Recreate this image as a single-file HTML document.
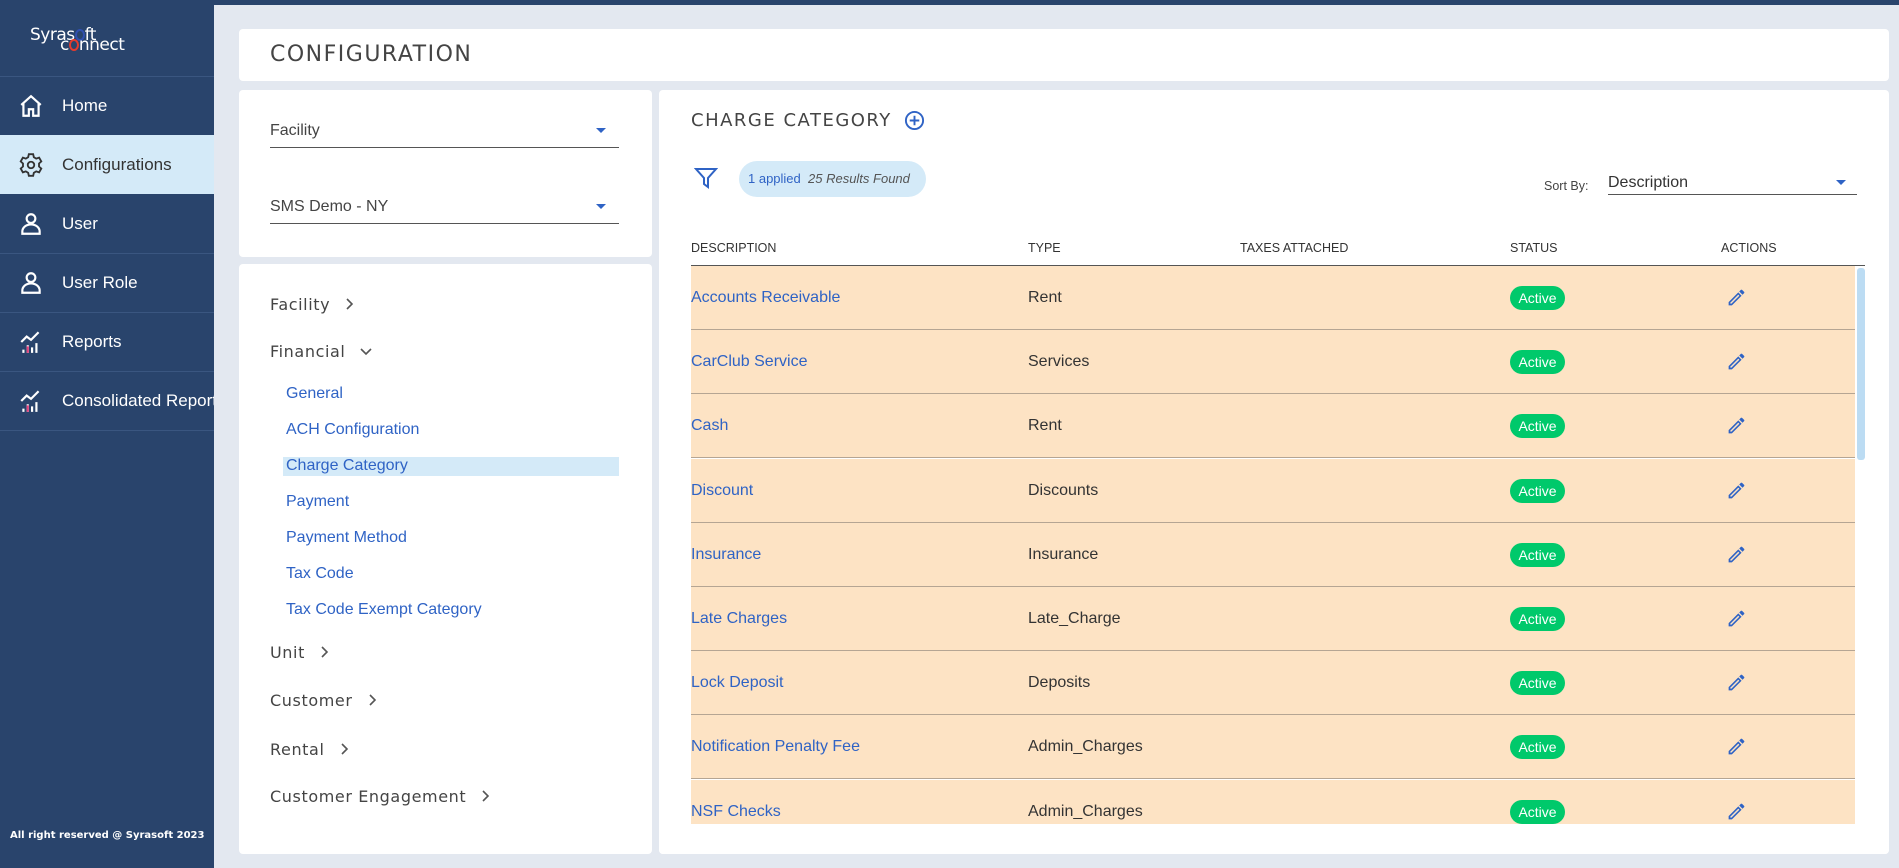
<!DOCTYPE html>
<html><head><meta charset="utf-8"><style>
*{box-sizing:border-box;margin:0;padding:0}
body{width:1899px;height:868px;overflow:hidden;background:#e3e8f0;font-family:"Liberation Sans",sans-serif;position:relative}
.abs{position:absolute}
#side{left:0;top:0;width:214px;height:868px;background:#29446c}
#topbar{left:214px;top:0;width:1685px;height:5px;background:#29446c}
.nav{position:absolute;left:0;width:214px;height:59px;border-top:1px solid #3a5680;color:#fff;font-size:17px;display:flex;align-items:center;white-space:nowrap;overflow:hidden}
.nav svg{position:absolute;left:18px}
.nav span{position:absolute;left:62px}
.nav.act{background:#d4eaf8;color:#333}
.card{position:absolute;background:#fff;border-radius:4px}
.h{font-family:"DejaVu Sans","Liberation Sans",sans-serif;color:#444;letter-spacing:0.5px}
.mh{position:absolute;left:270px;font-size:16px;font-family:"DejaVu Sans",sans-serif;color:#444;letter-spacing:.6px;white-space:nowrap}
.mh svg{display:inline-block;margin-left:14px;vertical-align:-1px}
.si{position:absolute;left:286px;font-size:16px;color:#2f63c5}
.th{position:absolute;top:241px;font-size:12.5px;color:#333}
.row{position:absolute;left:691px;width:1164px;height:64px;background:#fde3c4;border-bottom:1.5px solid #b5a593;font-size:16px}
.row div{position:absolute;top:23px}
.badge{position:absolute;left:819px;top:20px;width:55px;height:24px;border-radius:12px;background:#00c96b;color:#fff;font-size:14px;text-align:center;line-height:24px}
</style></head><body>
<div id="side" class="abs"></div>
<div id="topbar" class="abs"></div>
<div class="abs" style="left:30px;top:25px;color:#fff;font-size:17px;font-family:'DejaVu Sans',sans-serif;letter-spacing:-.5px">Syras<span style="display:inline-block;width:10px;height:12px;border:2px solid #3050b0;border-radius:50%;vertical-align:-1px"></span>ft</div>
<div class="abs" style="left:60px;top:35px;color:#fff;font-size:17px;font-family:'DejaVu Sans',sans-serif;letter-spacing:-.5px">c<span style="display:inline-block;width:10px;height:12px;border:2px solid #e53b2c;border-radius:50%;vertical-align:-1px"></span>nnect</div>

<div class="nav" style="top:76px"><svg width="26" height="26" viewBox="0 0 24 24" fill="none" stroke="#fff" stroke-width="2"><path d="M3 11L12 3l9 8M5 9v12h5v-6h4v6h5V9"/></svg><span>Home</span></div>
<div class="nav act" style="top:135px;border-top:0"><svg width="26" height="26" viewBox="0 0 24 24" fill="none" stroke="#333" stroke-width="1.7"><circle cx="12" cy="12" r="3"/><path d="M10 2h4l.6 2.8 2.2 1.3 2.7-.9 2 3.5-2.1 1.9v2.8l2.1 1.9-2 3.5-2.7-.9-2.2 1.3L14 22h-4l-.6-2.8-2.2-1.3-2.7.9-2-3.5 2.1-1.9v-2.8L2.5 8.7l2-3.5 2.7.9 2.2-1.3z"/></svg><span>Configurations</span></div>
<div class="nav" style="top:194px;border-top:0"><svg width="26" height="26" viewBox="0 0 24 24" fill="none" stroke="#fff" stroke-width="2"><circle cx="12" cy="7" r="4"/><path d="M4 21v-2a6 5 0 0 1 16 0v2z"/></svg><span>User</span></div>
<div class="nav" style="top:253px"><svg width="26" height="26" viewBox="0 0 24 24" fill="none" stroke="#fff" stroke-width="2"><circle cx="12" cy="7" r="4"/><path d="M4 21v-2a6 5 0 0 1 16 0v2z"/></svg><span>User Role</span></div>
<div class="nav" style="top:312px"><svg width="26" height="26" viewBox="0 0 24 24" fill="none" stroke="#fff" stroke-width="2"><path d="M3 12l5-5 4 3 7-7M5 22v-3M9 22v-7M13 22v-5M17 22v-9" /><path d="M9 22v-6" stroke="#e0407a"/></svg><span>Reports</span></div>
<div class="nav" style="top:371px"><svg width="26" height="26" viewBox="0 0 24 24" fill="none" stroke="#fff" stroke-width="2"><path d="M3 12l5-5 4 3 7-7M5 22v-3M9 22v-7M13 22v-5M17 22v-9"/><path d="M9 22v-6" stroke="#e0407a"/></svg><span>Consolidated Reports</span></div>
<div class="abs" style="left:0;top:430px;width:214px;border-top:1px solid #3a5680"></div>
<div class="abs" style="left:10px;top:830px;color:#fff;font-size:10px;font-weight:bold;font-family:'DejaVu Sans',sans-serif">All right reserved @ Syrasoft 2023</div>

<div class="card" style="left:239px;top:29px;width:1650px;height:52px"></div>
<div class="abs h" style="left:270px;top:42px;font-size:22px;letter-spacing:1.5px">CONFIGURATION</div>

<div class="card" style="left:239px;top:90px;width:413px;height:167px"></div>
<div class="abs" style="left:270px;top:122px;font-size:16px;color:#444">Facility</div>
<div class="abs" style="left:596px;top:128px;border-left:5px solid transparent;border-right:5px solid transparent;border-top:5px solid #2f63c5"></div>
<div class="abs" style="left:270px;top:147px;width:349px;border-top:1.5px solid #555"></div>
<div class="abs" style="left:270px;top:198px;font-size:16px;color:#444">SMS Demo - NY</div>
<div class="abs" style="left:596px;top:204px;border-left:5px solid transparent;border-right:5px solid transparent;border-top:5px solid #2f63c5"></div>
<div class="abs" style="left:270px;top:223px;width:349px;border-top:1.5px solid #555"></div>

<div class="card" style="left:239px;top:264px;width:413px;height:590px"></div>
<div class="mh" style="top:295px">Facility<svg width="12" height="14" viewBox="0 0 12 14" fill="none" stroke="#555" stroke-width="1.6"><path d="M3 2l5 5-5 5"/></svg></div>
<div class="mh" style="top:342px">Financial<svg width="14" height="12" viewBox="0 0 14 12" fill="none" stroke="#555" stroke-width="1.6"><path d="M2 3l5 5 5-5"/></svg></div>
<div class="si" style="top:385px">General</div>
<div class="si" style="top:421px">ACH Configuration</div>
<div class="abs" style="left:283px;top:457px;width:336px;height:19px;background:#d4eaf8"></div>
<div class="si" style="top:457px">Charge Category</div>
<div class="si" style="top:493px">Payment</div>
<div class="si" style="top:529px">Payment Method</div>
<div class="si" style="top:565px">Tax Code</div>
<div class="si" style="top:601px">Tax Code Exempt Category</div>
<div class="mh" style="top:643px">Unit<svg width="12" height="14" viewBox="0 0 12 14" fill="none" stroke="#555" stroke-width="1.6"><path d="M3 2l5 5-5 5"/></svg></div>
<div class="mh" style="top:691px">Customer<svg width="12" height="14" viewBox="0 0 12 14" fill="none" stroke="#555" stroke-width="1.6"><path d="M3 2l5 5-5 5"/></svg></div>
<div class="mh" style="top:740px">Rental<svg width="12" height="14" viewBox="0 0 12 14" fill="none" stroke="#555" stroke-width="1.6"><path d="M3 2l5 5-5 5"/></svg></div>
<div class="mh" style="top:787px">Customer Engagement<svg width="12" height="14" viewBox="0 0 12 14" fill="none" stroke="#555" stroke-width="1.6"><path d="M3 2l5 5-5 5"/></svg></div>

<div class="card" style="left:659px;top:90px;width:1230px;height:764px"></div>
<div class="abs h" style="left:691px;top:110px;font-size:18px;letter-spacing:1.5px">CHARGE CATEGORY</div>
<svg class="abs" style="left:904px;top:110px" width="21" height="21" viewBox="0 0 22 22" fill="none" stroke="#2f63c5" stroke-width="2"><circle cx="11" cy="11" r="9"/><path d="M11 6v10M6 11h10"/></svg>
<svg class="abs" style="left:694px;top:166px" width="24" height="24" viewBox="0 0 24 24" fill="none" stroke="#2f63c5" stroke-width="2"><path d="M2 3h20l-8 9v9l-4-3v-6z"/></svg>
<div class="abs" style="left:739px;top:161px;width:187px;height:36px;border-radius:18px;background:#d4eaf8;font-size:13px;line-height:36px;padding-left:9px;color:#2f63c5;white-space:nowrap">1 applied &nbsp;<i style="color:#555">25 Results Found</i></div>
<div class="abs" style="left:1544px;top:179px;font-size:12.5px;color:#444">Sort By:</div>
<div class="abs" style="left:1608px;top:174px;font-size:16px;color:#333">Description</div>
<div class="abs" style="left:1836px;top:180px;border-left:5px solid transparent;border-right:5px solid transparent;border-top:5px solid #2f63c5"></div>
<div class="abs" style="left:1608px;top:194px;width:249px;border-top:1.5px solid #555"></div>

<div class="th" style="left:691px">DESCRIPTION</div>
<div class="th" style="left:1028px">TYPE</div>
<div class="th" style="left:1240px">TAXES ATTACHED</div>
<div class="th" style="left:1510px">STATUS</div>
<div class="th" style="left:1721px">ACTIONS</div>
<div class="abs" style="left:691px;top:265px;width:1174px;border-top:1.5px solid #555"></div>

<div class="abs" style="left:691px;top:266px;width:1164px;height:558px;overflow:hidden">
<div id="rows"></div>
</div>
<div class="abs" style="left:1857px;top:268px;width:8px;height:192px;background:#bcdcf3;border-radius:3px"></div>
<div class="abs" style="left:659px;top:824px;width:1230px;height:30px;background:#fff;border-radius:0 0 4px 4px"></div>
<script>
var d=[["Accounts Receivable","Rent"],["CarClub Service","Services"],["Cash","Rent"],["Discount","Discounts"],["Insurance","Insurance"],["Late Charges","Late_Charge"],["Lock Deposit","Deposits"],["Notification Penalty Fee","Admin_Charges"],["NSF Checks","Admin_Charges"]];
var h="";d.forEach(function(r,i){h+='<div class="row" style="left:0;top:'+(i*64.2)+'px"><div style="left:0;color:#2f63c5">'+r[0]+'</div><div style="left:337px;color:#333">'+r[1]+'</div><span class="badge">Active</span><svg style="position:absolute;left:1035px;top:21px" width="21" height="21" viewBox="0 0 24 24"><path fill="#2f63c5" d="M3 17.25V21h3.75L17.8 9.94l-3.75-3.75zM20.7 7.04a1 1 0 0 0 0-1.41l-2.34-2.34a1 1 0 0 0-1.41 0l-1.83 1.83 3.75 3.75z"/><path fill="#fde3c4" d="M5 19v-1.2L14.05 8.75l1.2 1.2L6.2 19z"/></svg></div>'});
document.getElementById("rows").innerHTML=h;
</script>
</body></html>
